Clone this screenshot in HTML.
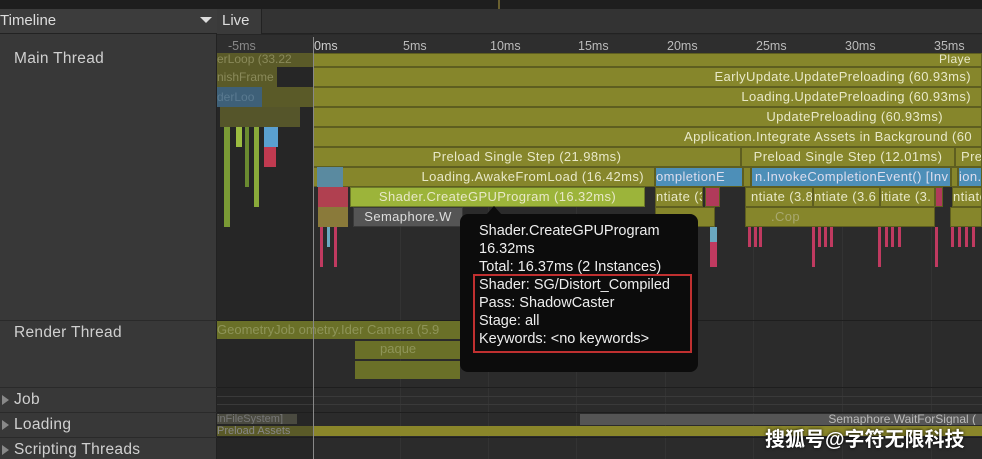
<!DOCTYPE html>
<html><head><meta charset="utf-8"><style>
*{margin:0;padding:0;box-sizing:border-box}
body{width:982px;height:459px;overflow:hidden;background:#2b2b2b;font-family:"Liberation Sans","DejaVu Sans",sans-serif;position:relative;color:#d8d8d8}
div{position:absolute}
.b{background:#86862b;border:1px solid #5e5e20;color:#e8e8c8;font-size:13px;letter-spacing:0.4px;line-height:18px;white-space:nowrap;overflow:hidden;height:20px}
.r{text-align:right;padding-right:10px}
.c{text-align:center}
.lbl{font-size:15.5px;color:#d0d0d0;letter-spacing:0.3px}
.tt{font-size:14.5px;color:#eee;line-height:18px}
.pk{width:3px;background:#c03a60;top:227px}
.rl{top:39px;font-size:12.5px;color:#bbb}
</style></head><body>
<div style="left:0;top:0;width:982px;height:9px;background:#1e1e1e"></div>
<div style="left:498px;top:0;width:2px;height:9px;background:#6a6030"></div>
<div style="left:0;top:9px;width:217px;height:25px;background:#3c3c3c;border-bottom:1px solid #222"></div>
<div style="left:0;top:12px;font-size:15px;color:#ddd">Timeline</div>
<div style="left:200px;top:17px;width:0;height:0;border-left:6px solid transparent;border-right:6px solid transparent;border-top:6px solid #ddd"></div>
<div style="left:217px;top:9px;width:765px;height:25px;background:#333;border-bottom:1px solid #222"></div>
<div style="left:217px;top:9px;width:45px;height:25px;background:#3a3a3a;border-right:1px solid #222"></div>
<div style="left:222px;top:12px;font-size:15px;color:#ddd">Live</div>
<div style="left:0;top:34px;width:217px;height:425px;background:#383838;border-right:1px solid #222"></div>
<div style="left:14px;top:50px" class="lbl">Main Thread</div>
<div style="left:0;top:320px;width:217px;height:1px;background:#2a2a2a"></div>
<div style="left:14px;top:324px" class="lbl">Render Thread</div>
<div style="left:0;top:387px;width:217px;height:1px;background:#2a2a2a"></div>
<div style="left:0;top:412px;width:217px;height:1px;background:#2a2a2a"></div>
<div style="left:0;top:437px;width:217px;height:1px;background:#2a2a2a"></div>
<div style="left:2px;top:395px;border-top:5px solid transparent;border-bottom:5px solid transparent;border-left:7px solid #888"></div>
<div style="left:2px;top:420px;border-top:5px solid transparent;border-bottom:5px solid transparent;border-left:7px solid #888"></div>
<div style="left:2px;top:445px;border-top:5px solid transparent;border-bottom:5px solid transparent;border-left:7px solid #888"></div>
<div style="left:14px;top:391px" class="lbl">Job</div>
<div style="left:14px;top:416px" class="lbl">Loading</div>
<div style="left:14px;top:441px" class="lbl">Scripting Threads</div>
<div style="left:217px;top:34px;width:96px;height:425px;background:#262626"></div>
<div style="left:217px;top:35px;width:765px;height:18px;background:#2e2e2e"></div>
<div class="rl" style="left:228px;color:#888">-5ms</div>
<div class="rl" style="left:314px;color:#ccc">0ms</div>
<div class="rl" style="left:403px">5ms</div>
<div class="rl" style="left:490px">10ms</div>
<div class="rl" style="left:578px">15ms</div>
<div class="rl" style="left:667px">20ms</div>
<div class="rl" style="left:756px">25ms</div>
<div class="rl" style="left:845px">30ms</div>
<div class="rl" style="left:934px">35ms</div>
<div style="left:400px;top:53px;width:1px;height:406px;background:#333"></div>
<div style="left:488px;top:53px;width:1px;height:406px;background:#333"></div>
<div style="left:576px;top:53px;width:1px;height:406px;background:#333"></div>
<div style="left:665px;top:53px;width:1px;height:406px;background:#333"></div>
<div style="left:753px;top:53px;width:1px;height:406px;background:#333"></div>
<div style="left:842px;top:53px;width:1px;height:406px;background:#333"></div>
<div style="left:931px;top:53px;width:1px;height:406px;background:#333"></div>
<div class="b r" style="left:313px;top:53px;width:669px;height:14px;line-height:11px;font-size:12px">Playe</div>
<div class="b r" style="left:313px;top:67px;width:669px">EarlyUpdate.UpdatePreloading (60.93ms)</div>
<div class="b r" style="left:313px;top:87px;width:669px">Loading.UpdatePreloading (60.93ms)</div>
<div class="b r" style="left:313px;top:107px;width:669px;padding-right:38px">UpdatePreloading (60.93ms)</div>
<div class="b" style="left:313px;top:127px;width:669px;padding-left:370px">Application.Integrate Assets in Background (60</div>
<div class="b c" style="left:313px;top:147px;width:428px">Preload Single Step (21.98ms)</div>
<div class="b c" style="left:741px;top:147px;width:214px">Preload Single Step (12.01ms)</div>
<div class="b" style="left:955px;top:147px;width:27px;padding-left:5px">Pre</div>
<div class="b r" style="left:313px;top:167px;width:342px">Loading.AwakeFromLoad (16.42ms)</div>
<div class="b" style="left:317px;top:167px;width:26px;background:#5a8aa0;border:none"></div>
<div class="b" style="left:655px;top:167px;width:88px;background:#4d8fb8;color:#dde">ompletionE</div>
<div class="b" style="left:743px;top:167px;width:8px"></div>
<div class="b" style="left:751px;top:167px;width:200px;background:#4d8fb8;color:#dde;padding-left:3px">n.InvokeCompletionEvent() [Inv</div>
<div class="b" style="left:951px;top:167px;width:7px"></div>
<div class="b" style="left:958px;top:167px;width:24px;background:#4d8fb8;color:#dde">ion.In</div>
<div class="b" style="left:318px;top:187px;width:30px;background:#b04050;border:none"></div>
<div class="b c" style="left:350px;top:187px;width:295px;background:#9cb43a;border-color:#6c7a28">Shader.CreateGPUProgram (16.32ms)</div>
<div class="b" style="left:655px;top:187px;width:48px">ntiate (3.2</div>
<div class="b" style="left:705px;top:187px;width:15px;background:#b03a5a"></div>
<div class="b" style="left:745px;top:187px;width:68px;padding-left:5px">ntiate (3.8</div>
<div class="b" style="left:813px;top:187px;width:67px">ntiate (3.6</div>
<div class="b" style="left:880px;top:187px;width:55px">itiate (3.</div>
<div class="b" style="left:935px;top:187px;width:8px;background:#b03a5a"></div>
<div class="b" style="left:952px;top:187px;width:30px">ntiate</div>
<div class="b" style="left:318px;top:207px;width:30px;background:#8a7a3a;border:none"></div>
<div class="b c" style="left:353px;top:207px;width:110px;background:#555;border-color:#3a3a3a;color:#ddd">Semaphore.W</div>
<div class="b" style="left:655px;top:207px;width:60px"></div>
<div class="b" style="left:745px;top:207px;width:190px;color:#a8a870;padding-left:25px">.Cop</div>
<div class="b" style="left:950px;top:207px;width:32px"></div>
<div class="pk" style="left:320px;height:40px"></div>
<div class="pk" style="left:334px;height:40px"></div>
<div style="left:327px;top:227px;width:3px;height:20px;background:#6aa8c0"></div>
<div class="pk" style="left:710px;height:40px;width:7px"></div>
<div style="left:710px;top:227px;width:7px;height:15px;background:#6aa8c0"></div>
<div class="pk" style="left:748px;height:20px"></div><div class="pk" style="left:754px;height:20px"></div><div class="pk" style="left:759px;height:20px"></div>
<div class="pk" style="left:812px;height:40px"></div><div class="pk" style="left:818px;height:20px"></div><div class="pk" style="left:824px;height:20px"></div><div class="pk" style="left:830px;height:20px"></div>
<div class="pk" style="left:878px;height:40px"></div><div class="pk" style="left:885px;height:20px"></div><div class="pk" style="left:891px;height:20px"></div><div class="pk" style="left:898px;height:20px"></div>
<div class="pk" style="left:935px;height:40px"></div>
<div class="pk" style="left:951px;height:20px"></div><div class="pk" style="left:958px;height:20px"></div><div class="pk" style="left:965px;height:20px"></div><div class="pk" style="left:972px;height:20px"></div>
<div style="left:217px;top:53px;width:96px;height:14px;background:#5a5a28;color:#8a8a5a;font-size:12px;line-height:12px;overflow:hidden">erLoop (33.22</div>
<div style="left:217px;top:67px;width:60px;height:20px;background:#5a5a28;color:#8a8a5a;font-size:12px;line-height:20px;overflow:hidden">nishFrame</div>
<div style="left:217px;top:87px;width:45px;height:20px;background:#3e6078;color:#5a7a90;font-size:12px;line-height:20px">derLoo</div>
<div style="left:262px;top:87px;width:51px;height:20px;background:#5a5a28"></div>
<div style="left:220px;top:107px;width:80px;height:20px;background:#55552a"></div>
<div style="left:264px;top:127px;width:14px;height:20px;background:#5aa0d0"></div>
<div style="left:224px;top:127px;width:6px;height:100px;background:#7a9a35"></div>
<div style="left:236px;top:127px;width:6px;height:20px;background:#9cbc40"></div>
<div style="left:254px;top:127px;width:5px;height:80px;background:#8aaa3a"></div>
<div style="left:264px;top:147px;width:12px;height:20px;background:#c03a50"></div>
<div style="left:245px;top:127px;width:4px;height:60px;background:#6a8a30"></div>
<div style="left:217px;top:320px;width:765px;height:1px;background:#1e1e1e"></div>
<div style="left:217px;top:321px;width:243px;height:18px;background:#6a7028;color:#8e9458;font-size:13px;line-height:18px;white-space:nowrap;overflow:hidden">GeometryJob ometry.Ider Camera (5.9</div>
<div style="left:355px;top:341px;width:105px;height:18px;background:#6a7028;color:#8e9458;font-size:13px;padding-left:25px">paque</div>
<div style="left:355px;top:361px;width:105px;height:18px;background:#6a7028"></div>
<div style="left:217px;top:387px;width:765px;height:1px;background:#1e1e1e"></div>
<div style="left:217px;top:396px;width:765px;height:1px;background:#3a3a3a"></div>
<div style="left:217px;top:404px;width:765px;height:1px;background:#3a3a3a"></div>
<div style="left:217px;top:412px;width:765px;height:1px;background:#1e1e1e"></div>
<div style="left:217px;top:414px;width:80px;height:10px;background:#4a4a40;color:#777;font-size:11px;line-height:10px;overflow:hidden">inFileSystem]</div>
<div style="left:580px;top:414px;width:402px;height:11px;background:#555;color:#bbb;font-size:12px;line-height:11px;text-align:right;padding-right:6px;overflow:hidden">Semaphore.WaitForSignal (</div>
<div style="left:217px;top:426px;width:96px;height:10px;background:#5a5a28;color:#888;font-size:11px;line-height:10px;overflow:hidden">Preload Assets</div>
<div style="left:313px;top:426px;width:669px;height:10px;background:#8a862a"></div>
<div style="left:217px;top:437px;width:765px;height:1px;background:#1e1e1e"></div>
<div style="left:313px;top:37px;width:1px;height:422px;background:#888"></div>
<div style="left:460px;top:214px;width:238px;height:158px;background:#0c0c0c;border-radius:8px"></div>
<div style="left:486px;top:206px;width:0;height:0;border-left:8px solid transparent;border-right:8px solid transparent;border-bottom:9px solid #0c0c0c"></div>
<div class="tt" style="left:479px;top:222px">Shader.CreateGPUProgram</div>
<div class="tt" style="left:479px;top:240px">16.32ms</div>
<div class="tt" style="left:479px;top:258px">Total: 16.37ms (2 Instances)</div>
<div style="left:473px;top:274px;width:219px;height:79px;border:2px solid #c03030"></div>
<div class="tt" style="left:479px;top:276px">Shader: SG/Distort_Compiled</div>
<div class="tt" style="left:479px;top:294px">Pass: ShadowCaster</div>
<div class="tt" style="left:479px;top:312px">Stage: all</div>
<div class="tt" style="left:479px;top:330px">Keywords: &lt;no keywords&gt;</div>
<div style="left:765px;top:423px;font-size:20px;font-weight:bold;color:#fff;font-family:'Liberation Sans','Noto Sans CJK SC',sans-serif;text-shadow:0 0 3px #000">搜狐号@字符无限科技</div>
</body></html>
